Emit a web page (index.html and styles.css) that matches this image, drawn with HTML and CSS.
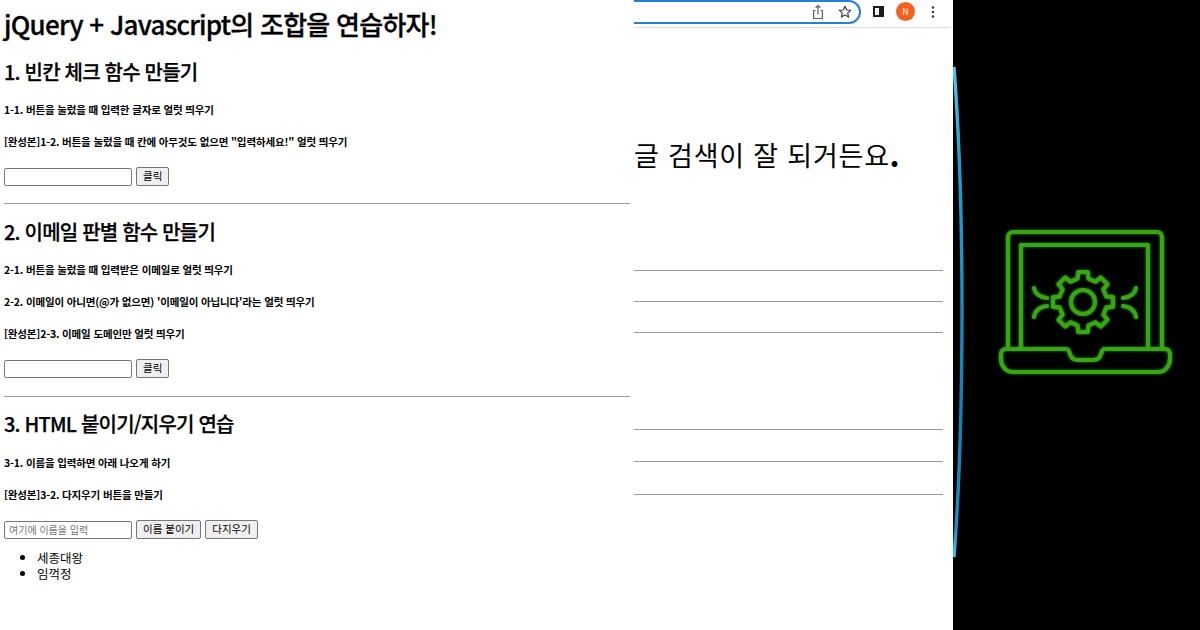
FILE: index.html
```html
<!DOCTYPE html>
<html lang="ko">
<head>
<meta charset="utf-8">
<title>jQuery + Javascript의 조합을 연습하자!</title>
<link rel="stylesheet" href="styles.css">
</head>
<body>
<div class="page">
  <main class="doc">
    <h1>jQuery + Javascript의 조합을 연습하자!</h1>
    <section>
      <h2>1. 빈칸 체크 함수 만들기</h2>
      <p>1-1. 버튼을 눌렀을 때 입력한 글자로 얼럿 띄우기</p>
      <p>[완성본]1-2. 버튼을 눌렀을 때 칸에 아무것도 없으면 "입력하세요!" 얼럿 띄우기</p>
      <div class="row"><input type="text" class="field"><button class="btn">클릭</button></div>
    </section>
    <hr class="rule">
    <section>
      <h2>2. 이메일 판별 함수 만들기</h2>
      <p>2-1. 버튼을 눌렀을 때 입력받은 이메일로 얼럿 띄우기</p>
      <p>2-2. 이메일이 아니면(@가 없으면) '이메일이 아닙니다'라는 얼럿 띄우기</p>
      <p>[완성본]2-3. 이메일 도메인만 얼럿 띄우기</p>
      <div class="row row-tail"><input type="text" class="field"><button class="btn">클릭</button></div>
    </section>
    <hr class="rule rule-tight">
    <section class="last">
      <h2>3. HTML 붙이기/지우기 연습</h2>
      <p>3-1. 이름을 입력하면 아래 나오게 하기</p>
      <p>[완성본]3-2. 다지우기 버튼을 만들기</p>
      <div class="row"><input type="text" class="field" placeholder="여기에 이름을 입력"><button class="btn">이름 붙이기</button><button class="btn">다지우기</button></div>
      <ul class="names">
        <li>세종대왕</li>
        <li>임꺽정</li>
      </ul>
    </section>
  </main>

  <div class="behind">
    <div class="toolbar">
      <div class="omnibox">
        <svg class="tool-icon" width="14" height="16" viewBox="0 0 14 16" fill="none" stroke="#5f6368" stroke-width="1.2"><path d="M4.5 6.5H2.6v8h8.8v-8H9.5"/><path d="M7 10.5V1.5M4.6 3.8 7 1.5l2.4 2.3"/></svg>
        <svg class="tool-icon" width="14" height="14" viewBox="0 0 14 14" fill="none" stroke="#3c4043" stroke-width="1.2" stroke-linejoin="round"><path d="M7 1.3 8.7 5l4 .4-3 2.7.9 4L7 10 3.4 12.100l.9-4-3-2.700 4-.4z"/></svg>
      </div>
      <span class="panel-icon"></span>
      <span class="avatar">N</span>
      <svg class="menu-icon" width="4" height="12" viewBox="0 0 4 12" fill="#3c4043"><circle cx="2" cy="1.500" r="1.300"/><circle cx="2" cy="6" r="1.300"/><circle cx="2" cy="10.500" r="1.300"/></svg>
    </div>
    <div class="big-text">글 검색이 잘 되거든요<b class="dot">.</b></div>
    <hr class="line line-a">
    <hr class="line line-b">
    <hr class="line line-b">
    <hr class="line line-c">
    <hr class="line line-d">
    <hr class="line line-e">
  </div>

  <aside class="side">
    <svg class="arc" width="14" height="500" viewBox="0 0 14 500" fill="none">
      <defs>
        <linearGradient id="arcfade" x1="0" y1="0" x2="0" y2="1">
          <stop offset="0" stop-color="#54c6e6"/>
          <stop offset="0.2" stop-color="#1f9ed0"/>
          <stop offset="0.7" stop-color="#1282b4"/>
          <stop offset="0.94" stop-color="#1a8fc4"/>
          <stop offset="1" stop-color="#4cc2e4"/>
        </linearGradient>
      </defs>
      <path d="M1 4C6 70 9 150 9 245 9 345 6 430 1 494" stroke="url(#arcfade)" stroke-width="3.400"/>
    </svg>
    <svg class="laptop" width="176" height="148" viewBox="998 229 176 148" fill="none" stroke="#37a612" stroke-width="4.200" stroke-linecap="round" stroke-linejoin="round">
      <path d="M1008 349V237a5 5 0 0 1 5-5h144a5 5 0 0 1 5 5v112"/>
      <path d="M1021 349V245h127v104"/>
      <path d="M1006 349h60c3 0 3 2 4 5 1 4 4 6 8 6h15c4 0 7-2 8-6 1-3 1-5 4-5h60c3 0 5 2 5 5v5c0 7-5 13-12 13h-145c-7 0-12-6-12-13v-5c0-3 2-5 5-5z"/>
      <g transform="translate(1083 302)">
        <path d="M23.400-5.400 30-4.800V4.800L23.400 5.400 20.300 12.700 24.600 17.800 17.800 24.600 12.700 20.300 5.400 23.400 4.800 30H-4.800L-5.400 23.400-12.700 20.300-17.800 24.600-24.600 17.800-20.300 12.700-23.400 5.400-30 4.800V-4.800L-23.400-5.400-20.300-12.700-24.600-17.800-17.800-24.600-12.700-20.300-5.400-23.400-4.800-30H4.800L5.400-23.400 12.700-20.300 17.800-24.600 24.600-17.800 20.300-12.700z"/>
        <circle r="12"/>
      </g>
      <path d="M1034 288c1 6 5 9 13 10M1034 317c1-6 5-10 13-11M1136 288c-1 6-5 9-13 10M1136 317c-1-6-5-10-13-11"/>
    </svg>
  </aside>
</div>
</body>
</html>
```
FILE: styles.css
```css
* { box-sizing: border-box; }
html, body { margin: 0; padding: 0; }
body {
  background: #fff;
  color: #000;
  font-family: "Noto Sans CJK KR", "Noto Sans", sans-serif;
}
.page {
  display: flex;
  width: 1200px;
  height: 630px;
  overflow: hidden;
}
.doc {
  width: 630px;
  padding-left: 4px;
  flex: none;
}
h1 {
  margin: 8px 0 19px;
  font-size: 26px;
  line-height: 32px;
  font-weight: 500;
  letter-spacing: -0.75px;
  -webkit-text-stroke: 0.3px #000;
  white-space: nowrap;
}
h2 {
  margin: 0 0 18px;
  font-size: 20px;
  line-height: 26px;
  font-weight: 500;
  letter-spacing: -0.8px;
  -webkit-text-stroke: 0.25px #000;
}
.last h2 { margin-bottom: 19px; }
p {
  margin: 0 0 18px;
  font-size: 10.500px;
  line-height: 14px;
  font-weight: 700;
  letter-spacing: -0.15px;
}
.row {
  display: flex;
  align-items: center;
  gap: 4px;
  height: 19px;
  margin-top: 18px;
  margin-bottom: 17px;
}
.row-tail { margin-bottom: 18px; }
.last .row { margin-bottom: 11px; }
.field {
  width: 128px;
  height: 18px;
  padding: 0 4px;
  border: 1px solid #767676;
  border-radius: 2px;
  background: #fff;
  font: 10px "Noto Sans CJK KR", sans-serif;
}
.field::placeholder { color: #757575; opacity: 1; }
.btn {
  height: 19px;
  padding: 0 6px;
  border: 1px solid #767676;
  border-radius: 2px;
  background: #efefef;
  color: #000;
  font: 10.500px/1 "Noto Sans CJK KR", sans-serif;
}
.rule {
  margin: 0 0 15px;
  border: 0;
  border-top: 1px solid #9a9a9a;
}
.rule-tight { margin-bottom: 14px; }
.names {
  margin: 0;
  padding-left: 33px;
  font-size: 12.500px;
  line-height: 16px;
}
.behind {
  width: 323px;
  flex: none;
  padding: 0 10px 0 4px;
}
.toolbar {
  display: flex;
  align-items: center;
  width: 316px;
  height: 28px;
  padding-bottom: 4px;
  border-bottom: 1px solid #dadce0;
}
.omnibox {
  display: flex;
  align-items: center;
  justify-content: flex-end;
  gap: 13px;
  width: 227px;
  height: 24px;
  padding-right: 7px;
  border: 2px solid #2a7fd0;
  border-left: 0;
  border-radius: 0 12px 12px 0;
}
.panel-icon {
  width: 11px;
  height: 11px;
  margin-left: 12px;
  border: 2px solid #1c1c1c;
  border-right-width: 5px;
  background: #fff;
}
.avatar {
  width: 19px;
  height: 19px;
  margin-left: 12px;
  border-radius: 50%;
  background: #f4611e;
  color: #fff;
  font-size: 9px;
  line-height: 19px;
  text-align: center;
}
.menu-icon { margin-left: 16px; }
.big-text {
  margin-top: 107px;
  font-size: 27px;
  font-weight: 400;
  line-height: 40px;
  letter-spacing: 0.8px;
  white-space: nowrap;
}
.dot { font-weight: 900; }
.line {
  margin: 30px 0 0;
  border: 0;
  border-top: 1px solid #9a9a9a;
}
.line-a { margin-top: 95px; }
.line-c { margin-top: 96px; }
.line-d { margin-top: 31px; }
.line-e { margin-top: 32px; }
.side {
  position: relative;
  flex: 1;
  display: flex;
  align-items: flex-start;
  background: #000;
}
.arc {
  position: absolute;
  left: 0;
  top: 63px;
  filter: blur(0.4px);
}
.laptop {
  margin: 229px 0 0 45px;
  filter: blur(0.4px) drop-shadow(0 0 1.500px #2c8a10);
}
```
